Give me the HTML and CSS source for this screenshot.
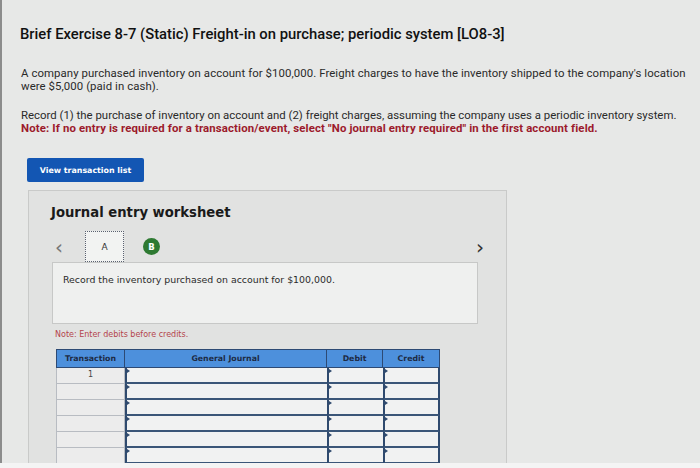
FILE: index.html
```html
<!DOCTYPE html>
<html>
<head>
<meta charset="utf-8">
<link rel="stylesheet" href="styles.css">
</head>
<body>
<div class="page">
  <h1 class="title">Brief Exercise 8-7 (Static) Freight-in on purchase; periodic system [LO8-3]</h1>
  <p class="para p1">A company purchased inventory on account for $100,000. Freight charges to have the inventory shipped to the company's location were $5,000 (paid in cash).</p>
  <p class="para p2">Record (1) the purchase of inventory on account and (2) freight charges, assuming the company uses a periodic inventory system.<br><span class="note">Note: If no entry is required for a transaction/event, select "No journal entry required" in the first account field.</span></p>
  <button class="btn">View transaction list</button>
  <div class="panel">
    <h2 class="ws-title">Journal entry worksheet</h2>
    <div class="nav">
      <span class="chev">&lsaquo;</span>
      <span class="tab-a">A</span>
      <span class="tab-b">B</span>
      <span class="chev chev-r">&rsaquo;</span>
    </div>
    <div class="desc">Record the inventory purchased on account for $100,000.</div>
    <div class="hint">Note: Enter debits before credits.</div>
    <div class="table">
      <div class="row head">
        <div class="th">Transaction</div>
        <div class="th">General Journal</div>
        <div class="th">Debit</div>
        <div class="th">Credit</div>
      </div>
      <div class="row"><div class="tc">1</div><div class="in"></div><div class="in"></div><div class="in"></div></div>
      <div class="row"><div class="tc"></div><div class="in"></div><div class="in"></div><div class="in"></div></div>
      <div class="row"><div class="tc"></div><div class="in"></div><div class="in"></div><div class="in"></div></div>
      <div class="row"><div class="tc"></div><div class="in"></div><div class="in"></div><div class="in"></div></div>
      <div class="row"><div class="tc"></div><div class="in"></div><div class="in"></div><div class="in"></div></div>
      <div class="row"><div class="tc"></div><div class="in"></div><div class="in"></div><div class="in"></div></div>
    </div>
  </div>
</div>
</body>
</html>
```
FILE: styles.css
```css
html, body { margin: 0; padding: 0; background: #f4f4f4; }
.page {
  height: 463px;
  overflow: hidden;
  background: #e7e8e7;
  border-left: 2px solid #8c8c8c;
  padding: 0 0 0 18px;
  box-sizing: border-box;
  font-family: "Roboto", "Liberation Sans", sans-serif;
  color: #1e1e1e;
}
.title {
  margin: 0;
  padding-top: 25px;
  font-size: 14.8px;
  line-height: 18px;
  font-weight: 500;
  color: #111;
}
.para {
  margin: 0;
  font-size: 11.4px;
  line-height: 12.5px;
  color: #2a2a2a;
  padding-left: 1px;
  width: 678px;
}
.p1 { margin-top: 24px; letter-spacing: 0.07px; }
.p2 { margin-top: 17px; }
.note { color: #9c1a2c; font-weight: 700; letter-spacing: 0.13px; }
.btn {
  display: block;
  margin: 24px 0 0 7px;
  width: 117px;
  height: 24px;
  border: none;
  border-radius: 2px;
  background: #1356b3;
  color: #fff;
  font-family: "DejaVu Sans", sans-serif;
  font-weight: 700;
  font-size: 7.9px;
  padding: 0;
}
.panel {
  margin: 8px 0 0 8px;
  width: 479px;
  height: 300px;
  box-sizing: border-box;
  background: #e1e2e1;
  border: 1px solid #c9cac9;
  padding: 12px 0 0 22px;
}
.ws-title {
  margin: 0;
  font-family: "DejaVu Sans", sans-serif;
  font-size: 13.2px;
  line-height: 20px;
  font-weight: 700;
  color: #1a1a1a;
}
.nav {
  display: flex;
  align-items: center;
  height: 31px;
  margin-top: 8px;
  width: 438px;
}
.chev {
  font-family: "DejaVu Sans", sans-serif;
  font-size: 20px;
  color: #777;
  margin-left: 4px;
  width: 30px;
}
.chev-r { margin-left: auto; color: #333; width: auto; margin-right: 5px; }
.tab-a {
  box-sizing: border-box;
  width: 39px;
  height: 31px;
  border: 1.5px dotted #5a6170;
  background: #f2f3f2;
  display: flex;
  align-items: center;
  justify-content: center;
  font-family: "DejaVu Sans", sans-serif;
  font-size: 9px;
  color: #333;
}
.tab-b {
  margin-left: 19px;
  width: 17px;
  height: 17px;
  border-radius: 50%;
  background: #2e7a32;
  color: #fff;
  font-family: "DejaVu Sans", sans-serif;
  font-size: 8.5px;
  font-weight: 700;
  display: flex;
  align-items: center;
  justify-content: center;
}
.desc {
  margin-left: 1px;
  width: 426px;
  height: 62px;
  box-sizing: border-box;
  background: #eff0ef;
  border: 1px solid #c7c8c7;
  padding: 11px 0 0 10px;
  font-family: "DejaVu Sans", sans-serif;
  font-size: 9.4px;
  color: #2a2a2a;
}
.hint {
  margin: 6px 0 0 4px;
  font-family: "DejaVu Sans", sans-serif;
  font-size: 8px;
  color: #b4444c;
}
.table {
  margin: 10px 0 0 5px;
  width: 384px;
}
.row {
  display: grid;
  grid-template-columns: 69px 202px 56px 57px;
  height: 16px;
}
.head { height: 19px; }
.th {
  background: #4d90dc;
  border: 1px solid #2d4a74;
  border-left-width: 0;
  color: #1d2b44;
  font-family: "DejaVu Sans", sans-serif;
  font-weight: 700;
  font-size: 7.8px;
  display: flex;
  align-items: center;
  justify-content: center;
}
.th:first-child { border-left-width: 1px; }
.tc {
  background: #ececec;
  border: 1px solid #b8bcc2;
  border-top: 0;
  font-family: "DejaVu Sans", sans-serif;
  font-size: 8px;
  color: #444;
  text-align: center;
  line-height: 13px;
}
.in {
  background: #f1f2f2;
  border-left: 2px solid #2f4a6e;
  border-bottom: 2px solid #3b5678;
  position: relative;
}
.in:last-child { border-right: 2px solid #2f4a6e; }
.in::before {
  content: "";
  position: absolute;
  left: 0;
  top: 1px;
  border-top: 2px solid transparent;
  border-bottom: 2px solid transparent;
  border-left: 3px solid #2f4a6e;
}
```
